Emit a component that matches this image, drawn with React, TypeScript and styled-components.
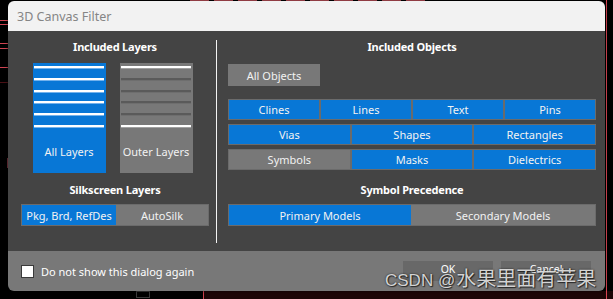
import React from "react";
import styled, { createGlobalStyle } from "styled-components";

const GlobalStyle = createGlobalStyle`
  html, body { margin: 0; padding: 0; background: #000; }
  body { font-family: "Noto Sans", "Open Sans", sans-serif; }
  * { box-sizing: border-box; }
`;

const BLUE = "#0877d6";
const GRAY = "#787878";
const EDGE = "#6b6b6b";

const Stage = styled.div`
  position: relative;
  width: 613px;
  height: 299px;
  overflow: hidden;
  background: #000;
  padding: 1px 0 0 8px;
`;

const Backdrop = styled.svg`
  position: absolute;
  left: 0;
  top: 0;
`;

const Dialog = styled.div`
  position: relative;
  width: 597px;
  height: 290px;
  border-radius: 6px;
  overflow: hidden;
  display: flex;
  flex-direction: column;
  box-shadow: 0 0 3px rgba(0, 0, 0, 0.7);
`;

const TitleBar = styled.div`
  height: 30px;
  flex: none;
  background: #f2f2f2;
  color: #858585;
  font-size: 12.5px;
  display: flex;
  align-items: center;
  padding-left: 9px;
`;

const Body = styled.div`
  height: 220px;
  flex: none;
  background: #444444;
  display: flex;
`;

const Panel = styled.div<{ $w: number; $pl: number; $pr: number }>`
  width: ${(p) => p.$w}px;
  flex: none;
  padding: 8px ${(p) => p.$pr}px 0 ${(p) => p.$pl}px;
  display: flex;
  flex-direction: column;
`;

const Heading = styled.div<{ $mt?: number }>`
  height: 16px;
  line-height: 16px;
  margin-top: ${(p) => p.$mt ?? 0}px;
  text-align: center;
  color: #ffffff;
  font-weight: 700;
  font-size: 11px;
  letter-spacing: -0.2px;
`;

const Divider = styled.div`
  width: 1px;
  flex: none;
  margin-top: 9px;
  height: 203px;
  background: #f4f4f4;
`;

const TileRow = styled.div`
  display: flex;
  gap: 14px;
  margin-top: 8px;
  padding-left: 12px;
`;

const Tile = styled.div<{ $on: boolean }>`
  width: 73px;
  height: 110px;
  background: ${(p) => (p.$on ? BLUE : GRAY)};
  display: flex;
  flex-direction: column;
  padding: 3px 2px 0 1px;
`;

const Stripes = styled.div`
  display: flex;
  flex-direction: column;
  gap: 8.8px;
`;

const Stripe = styled.div<{ $kind: "white" | "dim"; $on: boolean }>`
  height: 3px;
  border-top: 2px solid ${(p) => (p.$kind === "white" ? "#ffffff" : "#5a5a5a")};
  background: ${(p) =>
    p.$kind === "white" ? (p.$on ? "#73b2ec" : "#a0a0a0") : "#6e6e6e"};
`;

const TileLabel = styled.div`
  flex: 1;
  display: flex;
  align-items: center;
  justify-content: center;
  padding-top: 3px;
  color: #f2f2f2;
  font-size: 11px;
`;

const Segmented = styled.div<{ $mt: number }>`
  display: flex;
  height: 22px;
  margin-top: ${(p) => p.$mt}px;
  border: 1px solid ${EDGE};
  background: ${GRAY};
`;

const Seg = styled.div<{ $on: boolean; $w?: number }>`
  ${(p) => (p.$w ? `width: ${p.$w}px; flex: none;` : "flex: 1;")}
  background: ${(p) => (p.$on ? BLUE : GRAY)};
  color: #f2f2f2;
  font-size: 11px;
  display: flex;
  align-items: center;
  justify-content: center;
`;

const Button = styled.div<{ $on: boolean }>`
  width: 92px;
  height: 22px;
  margin-top: 9px;
  background: ${(p) => (p.$on ? BLUE : GRAY)};
  color: #f2f2f2;
  font-size: 11px;
  display: flex;
  align-items: center;
  justify-content: center;
`;

const Rows = styled.div`
  display: flex;
  flex-direction: column;
  gap: 4px;
  margin-top: 13px;
`;

const CellRow = styled.div<{ $cols: number }>`
  display: grid;
  grid-template-columns: repeat(${(p) => p.$cols}, 1fr);
  gap: 2px;
  padding: 1px;
  height: 21px;
  background: ${EDGE};
`;

const Cell = styled.div<{ $on: boolean }>`
  background: ${(p) => (p.$on ? BLUE : GRAY)};
  color: #f2f2f2;
  font-size: 11px;
  display: flex;
  align-items: center;
  justify-content: center;
`;

const Footer = styled.div`
  flex: 1;
  background: #787878;
  display: flex;
  align-items: center;
  padding: 0 14px 0 13px;
`;

const Check = styled.div`
  width: 13px;
  height: 13px;
  background: #ffffff;
  border: 1px solid #3a3a3a;
  flex: none;
`;

const CheckLabel = styled.span`
  margin-left: 7px;
  color: #ffffff;
  font-size: 11px;
  flex: 1;
`;

const FootButton = styled.div<{ $ml?: number }>`
  width: 90px;
  height: 20px;
  margin-left: ${(p) => p.$ml ?? 0}px;
  background: #686868;
  color: #ffffff;
  font-size: 10.5px;
  display: flex;
  align-items: flex-start;
  justify-content: center;
  padding-top: 1px;
`;

const Watermark = styled.div`
  position: absolute;
  left: 385px;
  top: 263px;
  display: flex;
  align-items: baseline;
  color: rgba(236, 236, 236, 0.88);
  text-shadow: 0 0 2px rgba(0, 0, 0, 0.8), 1px 1px 1px rgba(0, 0, 0, 0.6);
  white-space: nowrap;
  pointer-events: none;
`;

const WmLatin = styled.span`
  font-family: "Liberation Sans", "Noto Sans", sans-serif;
  font-size: 17px;
`;

const WmCjk = styled.span`
  font-family: "Noto Sans CJK SC", "Noto Sans", sans-serif;
  font-size: 20px;
  margin-left: 1px;
`;

const layerStripes = (on: boolean) =>
  [0, 1, 2, 3, 4, 5].map((i) => (
    <Stripe
      key={i}
      $on={on}
      $kind={on || i === 0 || i === 5 ? "white" : "dim"}
    />
  ));

const rows: { label: string; on: boolean }[][] = [
  [
    { label: "Clines", on: true },
    { label: "Lines", on: true },
    { label: "Text", on: true },
    { label: "Pins", on: true },
  ],
  [
    { label: "Vias", on: true },
    { label: "Shapes", on: true },
    { label: "Rectangles", on: true },
  ],
  [
    { label: "Symbols", on: false },
    { label: "Masks", on: true },
    { label: "Dielectrics", on: true },
  ],
];

function BackdropArt() {
  const dashes = [];
  for (let x = 190; x < 430; x += 24) {
    dashes.push(<line key={x} x1={x} y1={0.5} x2={x + 19} y2={0.5} stroke="#c0505a" strokeWidth={1} />);
  }
  return (
    <Backdrop width={613} height={299} viewBox="0 0 613 299">
      <rect x={0} y={0} width={613} height={299} fill="#000" />
      <rect x={203} y={291} width={410} height={8} fill="#1c0506" />
      <line x1={203.5} y1={291} x2={203.5} y2={299} stroke="#d0404c" />
      <line x1={606.5} y1={0} x2={606.5} y2={299} stroke="#d84452" />
      {dashes}
      {[20, 24, 43, 48, 67].map((y) => (
        <line key={y} x1={0} y1={y + 0.5} x2={8} y2={y + 0.5} stroke="#d04452" />
      ))}
      <line x1={0} y1={82.5} x2={8} y2={82.5} stroke="#4a1015" />
      <line x1={7.5} y1={158} x2={7.5} y2={168} stroke="#70303a" />
      <rect x={136.5} y={291.5} width={13} height={6} fill="none" stroke="#3a3a3a" />
    </Backdrop>
  );
}

export default function App() {
  return (
    <>
      <GlobalStyle />
      <Stage>
        <BackdropArt />
        <Dialog>
          <TitleBar>3D Canvas Filter</TitleBar>
          <Body>
            <Panel $w={208} $pl={13} $pr={7}>
              <Heading>Included Layers</Heading>
              <TileRow>
                <Tile $on={true}>
                  <Stripes>{layerStripes(true)}</Stripes>
                  <TileLabel>All Layers</TileLabel>
                </Tile>
                <Tile $on={false}>
                  <Stripes>{layerStripes(false)}</Stripes>
                  <TileLabel>Outer Layers</TileLabel>
                </Tile>
              </TileRow>
              <Heading $mt={9}>Silkscreen Layers</Heading>
              <Segmented $mt={6}>
                <Seg $on={true} $w={94}>Pkg, Brd, RefDes</Seg>
                <Seg $on={false}>AutoSilk</Seg>
              </Segmented>
            </Panel>
            <Divider />
            <Panel $w={388} $pl={11} $pr={9}>
              <Heading>Included Objects</Heading>
              <Button $on={false}>All Objects</Button>
              <Rows>
                {rows.map((r, i) => (
                  <CellRow key={i} $cols={r.length}>
                    {r.map((c) => (
                      <Cell key={c.label} $on={c.on}>
                        {c.label}
                      </Cell>
                    ))}
                  </CellRow>
                ))}
              </Rows>
              <Heading $mt={12}>Symbol Precedence</Heading>
              <Segmented $mt={6}>
                <Seg $on={true} $w={182}>Primary Models</Seg>
                <Seg $on={false}>Secondary Models</Seg>
              </Segmented>
            </Panel>
          </Body>
          <Footer>
            <Check />
            <CheckLabel>Do not show this dialog again</CheckLabel>
            <FootButton>OK</FootButton>
            <FootButton $ml={8}>Cancel</FootButton>
          </Footer>
        </Dialog>
        <Watermark>
          <WmLatin>CSDN @</WmLatin>
          <WmCjk>水果里面有苹果</WmCjk>
        </Watermark>
      </Stage>
    </>
  );
}
